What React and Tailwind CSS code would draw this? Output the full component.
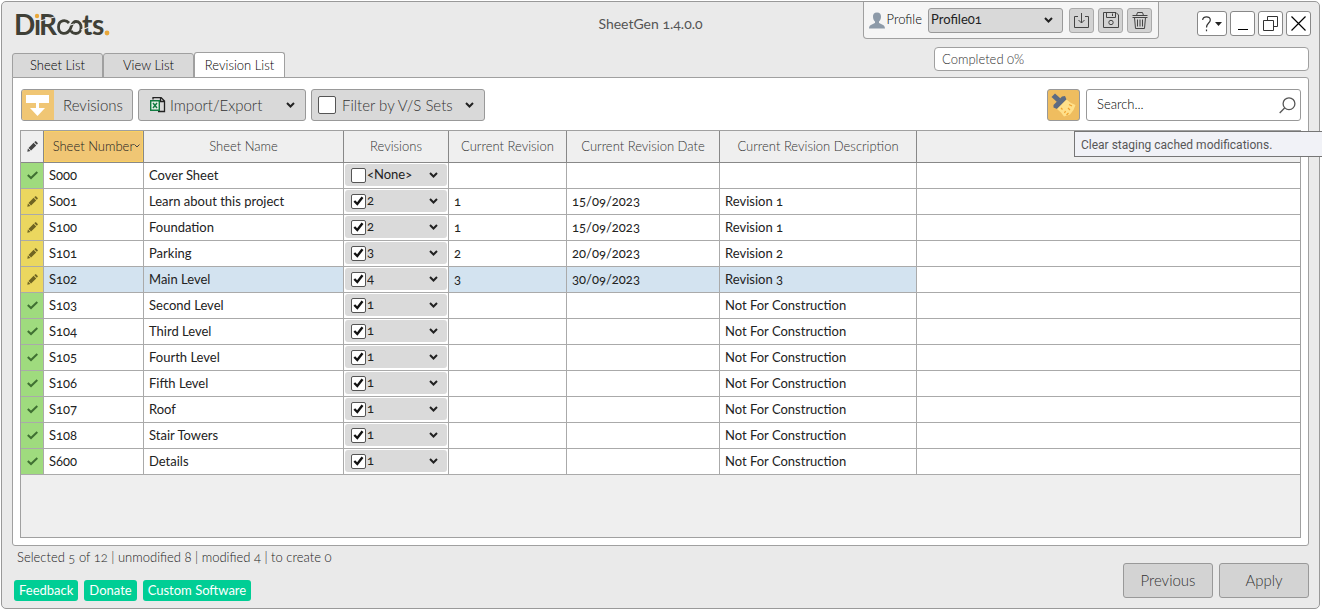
import React, { useState } from 'react';

const columns = [
  { label: 'Sheet Name', width: 'w-[200px]' },
  { label: 'Revisions', width: 'w-[105px]' },
  { label: 'Current Revision', width: 'w-[118px]' },
  { label: 'Current Revision Date', width: 'w-[153px]' },
  { label: 'Current Revision Description', width: 'w-[197px]' },
];

const initialSheets = [
  { number: 'S000', name: 'Cover Sheet', revisions: '<None>', checked: false, modified: false, current: '', date: '', description: '' },
  { number: 'S001', name: 'Learn about this project', revisions: '2', checked: true, modified: true, current: '1', date: '15/09/2023', description: 'Revision 1' },
  { number: 'S100', name: 'Foundation', revisions: '2', checked: true, modified: true, current: '1', date: '15/09/2023', description: 'Revision 1' },
  { number: 'S101', name: 'Parking', revisions: '3', checked: true, modified: true, current: '2', date: '20/09/2023', description: 'Revision 2' },
  { number: 'S102', name: 'Main Level', revisions: '4', checked: true, modified: true, current: '3', date: '30/09/2023', description: 'Revision 3' },
  { number: 'S103', name: 'Second Level', revisions: '1', checked: true, modified: false, current: '', date: '', description: 'Not For Construction' },
  { number: 'S104', name: 'Third Level', revisions: '1', checked: true, modified: false, current: '', date: '', description: 'Not For Construction' },
  { number: 'S105', name: 'Fourth Level', revisions: '1', checked: true, modified: false, current: '', date: '', description: 'Not For Construction' },
  { number: 'S106', name: 'Fifth Level', revisions: '1', checked: true, modified: false, current: '', date: '', description: 'Not For Construction' },
  { number: 'S107', name: 'Roof', revisions: '1', checked: true, modified: false, current: '', date: '', description: 'Not For Construction' },
  { number: 'S108', name: 'Stair Towers', revisions: '1', checked: true, modified: false, current: '', date: '', description: 'Not For Construction' },
  { number: 'S600', name: 'Details', revisions: '1', checked: true, modified: false, current: '', date: '', description: 'Not For Construction' },
];

const tabs = ['Sheet List', 'View List', 'Revision List'];

const Logo = () => (
  <svg width="110" height="42" viewBox="0 0 110 42" role="img" aria-label="DiRoots">
    <g fontFamily="Lato, sans-serif" fontSize="28" fontWeight="700" fill="#3f4037">
      <text x="0" y="31">D</text>
      <text x="20" y="31">ı</text>
      <text x="25" y="31">R</text>
      <text x="68" y="31">t</text>
      <text x="78" y="31">s</text>
    </g>
    <path
      d="M55 19 C52 15.500 44.500 15.500 44.500 23 C44.500 31 53 31 56 25.500 C58 21.500 58 17.500 62 17.500 C69 17.500 68.500 29.500 62 29.500 C59.500 29.500 57.500 28.500 57 26.500"
      fill="none"
      stroke="#3f4037"
      strokeWidth="2.800"
    />
    <path d="M26 17 L44 12 M52 22 L60 20 M67 26 L78 22" stroke="#eaeaea" strokeWidth="1.200" />
    <circle cx="23" cy="12" r="2.200" fill="#e9a83b" />
    <circle cx="93" cy="29" r="2.400" fill="#e9a83b" />
  </svg>
);

const Chevron = ({ className }) => (
  <svg className={className} width="9" height="6" viewBox="0 0 9 6" fill="none" aria-hidden="true">
    <path d="M1 1 L4.500 4.500 L8 1" stroke="#222" strokeWidth="2" />
  </svg>
);

const PencilIcon = ({ color }) => (
  <svg className="mx-auto" width="11" height="11" viewBox="0 0 11 11" fill={color} aria-hidden="true">
    <path d="M0.300 10.700 L0.900 7.500 L3.500 10.100 Z M1.500 6.900 L6.600 1.800 L9.200 4.400 L4.100 9.500 Z M7.300 1.200 L8.200 0.300 Q8.600 0 9 0.300 L10.700 2 Q11 2.400 10.700 2.800 L9.800 3.700 Z" />
  </svg>
);

const CheckIcon = () => (
  <svg className="mx-auto" width="11" height="9" viewBox="0 0 11 9" fill="none" aria-hidden="true">
    <path d="M0.800 4 L4 7 L10.300 1" stroke="#3f7032" strokeWidth="2" />
  </svg>
);

const CheckBox = ({ size, ...props }) => (
  <span className="relative inline-flex shrink-0">
    <input
      type="checkbox"
      className={`peer appearance-none rounded-[2px] border border-[#555] bg-white ${size === 'lg' ? 'size-[18px]' : 'size-[15px]'}`}
      {...props}
    />
    <svg className="pointer-events-none absolute inset-0 m-auto hidden peer-checked:block" width="11" height="10" viewBox="0 0 11 10" fill="none" aria-hidden="true">
      <path d="M1.300 5 L4.300 8 L9.500 1.200" stroke="#111" strokeWidth="2.400" />
    </svg>
  </span>
);

const RevisionPicker = ({ sheet, onToggle }) => (
  <div className="mx-px flex h-[22px] items-center rounded-[3px] bg-[#dadada] pl-1.5">
    <CheckBox
      checked={sheet.checked}
      onChange={onToggle}
      aria-label={`Apply revisions to ${sheet.number}`}
    />
    <div className="relative ml-px flex-1">
      <select className="block w-full appearance-none bg-transparent pb-0.5" defaultValue={sheet.revisions} aria-label={`Revisions of ${sheet.number}`}>
        <option>{sheet.revisions}</option>
      </select>
      <Chevron className="pointer-events-none absolute top-0 right-[9px] bottom-0 my-auto" />
    </div>
  </div>
);

const Header = () => (
  <header className="grid h-[45px] grid-cols-[1fr_auto_1fr] pr-2">
    <div className="pt-0.5 pl-3">
      <Logo />
    </div>
    <h1 className="mr-3 pt-3 text-[14px] leading-5 font-normal text-[#555]">SheetGen 1.4.0.0</h1>
    <div className="flex items-start justify-end">
      <div className="flex h-[37px] items-center rounded-b-[4px] border border-t-0 border-[#a0a0a0] bg-[#f5f5f5] pr-1.5 pl-1">
        <svg width="18" height="17" viewBox="0 0 18 17" fill="#8d9aa8" aria-hidden="true">
          <path d="M9 0.500 C12 0.500 13.200 2.600 13 5 C12.900 7 12 8.500 11 9.500 V11 C12.500 12 17 12.500 17 16.500 H1 C1 12.500 5.500 12 7 11 V9.500 C6 8.500 5.100 7 5 5 C4.800 2.600 6 0.500 9 0.500 Z" />
        </svg>
        <label htmlFor="profile" className="ml-px text-[13px] text-black">Profile</label>
        <div className="relative ml-1.5">
          <select id="profile" className="block h-[25px] w-[135px] appearance-none rounded-[3px] border border-[#999] bg-[#d9d9d9] pl-0.5 text-[13px] font-normal text-[#222]">
            <option>Profile01</option>
          </select>
          <Chevron className="pointer-events-none absolute top-0 right-2.5 bottom-0 my-auto" />
        </div>
        <div className="ml-1.5 flex gap-1">
          <button type="button" aria-label="Import profile" className="flex size-[25px] items-center justify-center rounded-[3px] border border-[#aaa] bg-[#d3d3d3]">
            <svg width="15" height="15" viewBox="0 0 15 15" fill="none" stroke="#444">
              <path d="M4 3.500 H0.500 V14.500 H14.500 V3.500 H11 M7.500 0 V10 M4.500 7 L7.500 10 L10.500 7" />
            </svg>
          </button>
          <button type="button" aria-label="Save profile" className="flex size-[25px] items-center justify-center rounded-[3px] border border-[#aaa] bg-[#d3d3d3]">
            <svg width="16" height="16" viewBox="0 0 16 16" fill="none" stroke="#444">
              <path d="M0.500 0.500 H13 L15.500 3 V15.500 H0.500 Z M3.500 0.500 V5.500 H12.500 V0.500 M9.500 1.500 V4" />
              <circle cx="8" cy="10.500" r="2.200" />
            </svg>
          </button>
          <button type="button" aria-label="Delete profile" className="flex size-[25px] items-center justify-center rounded-[3px] border border-[#aaa] bg-[#d3d3d3]">
            <svg width="16" height="17" viewBox="0 0 16 17" fill="none" stroke="#444">
              <path d="M0.500 3.500 H15.500 M0.500 5.500 H15.500 M4.500 3.500 L5.500 0.500 H10.500 L11.500 3.500 M2.500 5.500 L3.500 16.500 H12.500 L13.500 5.500 M5.500 7.500 V14.500 M8 7.500 V14.500 M10.500 7.500 V14.500" />
            </svg>
          </button>
        </div>
      </div>
      <div className="ml-[38px] flex gap-[3px] pt-[9px]">
        <button type="button" aria-label="Help" className="flex h-[25px] w-[30px] items-center justify-center gap-1 rounded-[3px] border border-[#888] bg-white">
          <svg width="9" height="16" viewBox="0 0 9 16" fill="none" stroke="#333" strokeWidth="1.200">
            <path d="M0.700 4 C0.700 -0.300 8.300 -0.300 8.300 4 C8.300 7.200 4.500 7 4.500 11.500 M4.500 13.500 V15.300" />
          </svg>
          <svg width="7" height="4" viewBox="0 0 7 4" fill="#222">
            <path d="M0 0 H7 L3.500 4 Z" />
          </svg>
        </button>
        <button type="button" aria-label="Minimize" className="flex size-[25px] items-end justify-center rounded-[3px] border border-[#888] bg-white pb-[5px]">
          <svg width="10" height="1" viewBox="0 0 10 1" fill="#000">
            <path d="M0 0 H10 V1 H0 Z" />
          </svg>
        </button>
        <button type="button" aria-label="Restore" className="flex size-[25px] items-center justify-center rounded-[3px] border border-[#888] bg-white">
          <svg width="15" height="15" viewBox="0 0 15 15" fill="none" stroke="#333">
            <path d="M0.500 4.500 H10.500 V14.500 H0.500 Z M4.500 4.500 V0.500 H14.500 V10.500 H10.500" />
          </svg>
        </button>
        <button type="button" aria-label="Close" className="flex size-[25px] items-center justify-center rounded-[3px] border border-[#888] bg-white">
          <svg width="15" height="15" viewBox="0 0 15 15" fill="none" stroke="#000" strokeWidth="1.200">
            <path d="M0.500 0.500 L14.500 14.500 M14.500 0.500 L0.500 14.500" />
          </svg>
        </button>
      </div>
    </div>
  </header>
);

const Toolbar = () => (
  <div className="flex h-8 items-stretch gap-[5px] pl-px">
    <button type="button" className="flex w-28 items-stretch overflow-hidden rounded-[3px] border border-[#999] bg-[#d9d9d9] text-[15px] text-[#333]">
      <span className="flex w-8 items-center justify-center bg-[#f0c674]">
        <svg width="24" height="21" viewBox="0 0 24 21" fill="#fff" aria-hidden="true">
          <path d="M0 0 H23 V8 H13 V13 H19 L11.500 21 L4 13 H10 V8 H0 Z" />
        </svg>
      </span>
      <span className="flex-1 self-center">Revisions</span>
    </button>
    <button type="button" className="flex w-42 items-center rounded-[3px] border border-[#999] bg-[#d9d9d9] pr-2.5 pl-[11px] text-[15px] text-[#333]">
      <svg width="16" height="16" viewBox="0 0 16 16" fill="none" aria-hidden="true">
        <path d="M3 2.500 V0.500 H11 L14.500 4 V14.500 H8 M10.500 0.500 V4.500 H14.500" stroke="#222" strokeWidth="1.300" />
        <path d="M0.700 3.700 H9.300 V13.300 H0.700 Z" fill="#e6f0e8" stroke="#107c41" strokeWidth="1.400" />
        <path d="M3 6 L7 11 M7 6 L3 11" stroke="#107c41" strokeWidth="1.500" />
      </svg>
      <span className="ml-1">Import/Export</span>
      <Chevron className="ml-auto" />
    </button>
    <div className="flex w-[174px] items-center rounded-[3px] border border-[#999] bg-[#d9d9d9] pr-2.5 pl-1.5 text-[15px] text-[#333]">
      <CheckBox id="filter-sets" size="lg" />
      <label htmlFor="filter-sets" className="ml-1.5">Filter by V/S Sets</label>
      <button type="button" aria-label="Choose sets" className="ml-auto">
        <Chevron />
      </button>
    </div>
    <div className="relative mr-px ml-auto flex">
      <button type="button" aria-label="Clear staging" aria-describedby="clear-tip" className="flex w-[33px] items-center justify-center rounded-[3px] border border-[#999] bg-[#efbd5f]">
        <svg width="25" height="24" viewBox="0 0 25 24" aria-hidden="true">
          <path d="M0.500 4 L4 0.500 L9.500 5.500 L6 9 Z" fill="#5d6b82" />
          <path d="M2.500 14.500 V12 L11 3.500 L14 3 L15.500 6.500 L6 16 Z" fill="#5d6b82" />
          <path d="M6 16 L15.500 6.500 L20 10 L24.500 12 L22.500 17 L19 21.500 L13 23.500 L10 19.500 Z" fill="#ffe08a" />
          <path d="M10 15 L11.500 16.500 M14.500 18 L13.500 20 M17 15 L19 17 M18 11.500 L21 13 M15.500 22 L17.500 20" stroke="#f0a22e" strokeWidth="1.200" />
        </svg>
      </button>
      <div id="clear-tip" role="tooltip" className="absolute top-[42px] left-[27px] z-10 h-[26px] w-[250px] border border-[#767676] bg-[#f1f2f7] pl-1.5 font-[Roboto,sans-serif] text-[12px] leading-[26px] font-normal whitespace-nowrap text-[#575757]">
        Clear staging cached modifications.
      </div>
    </div>
    <div className="flex w-[215px] items-center rounded-[3px] border border-[#999] bg-white pr-1">
      <input type="search" placeholder="Search..." aria-label="Search" className="min-w-0 flex-1 bg-transparent pl-2.5 text-[13px] outline-none placeholder:text-black" />
      <svg width="17" height="17" viewBox="0 0 17 17" fill="none" stroke="#555" strokeWidth="1.300" aria-hidden="true">
        <circle cx="10" cy="6.700" r="5.900" />
        <path d="M5.600 11 L0.700 16" />
      </svg>
    </div>
  </div>
);

const SheetTable = ({ sheets, onToggle }) => (
  <div className="flex-1 border border-[#a0a0a0] bg-[#efefef]">
    <table className="w-full table-fixed border-separate border-spacing-0 text-[13px] leading-5 text-[#222]">
      <thead>
        <tr className="h-8 text-[#333]">
          <th className="w-[23px] border-r border-b border-[#888] p-0" aria-label="Status">
            <PencilIcon color="#444" />
          </th>
          <th className="w-[100px] border-r border-b border-[#888] bg-[#f0c674] p-0 font-light text-[#222]">
            <button type="button" className="flex h-[31px] w-full items-center justify-end border border-[#fbd160] pr-0.5 pb-0.5 whitespace-nowrap">
              Sheet Number
              <svg width="6" height="4" viewBox="0 0 6 4" fill="none" stroke="#444" aria-hidden="true">
                <path d="M0.500 0.500 L3 3 L5.500 0.500" />
              </svg>
            </button>
          </th>
          {columns.map((column) => (
            <th key={column.label} className={`border-r border-b border-[#888] p-0 pb-0.5 font-light whitespace-nowrap ${column.width}`}>
              {column.label}
            </th>
          ))}
          <td className="border-b border-[#888]"></td>
        </tr>
      </thead>
      <tbody className="font-normal">
        {sheets.map((sheet) => {
          const cell = `border-r border-b border-[#aaa] pt-0 pr-0 pb-0.5 pl-[5px] ${sheet.number === 'S102' ? 'bg-[#d3e3f0]' : 'bg-white'}`;
          return (
            <tr key={sheet.number} className="h-[26px]">
              <td className={`border-r border-b border-[#aaa] p-0 ${sheet.modified ? 'bg-[#ebd75f]' : 'bg-[#9fdb7e]'}`}>
                {sheet.modified ? <PencilIcon color="#6f6422" /> : <CheckIcon />}
              </td>
              <td className={cell}>{sheet.number}</td>
              <td className={cell}>{sheet.name}</td>
              <td className="border-r border-b border-[#aaa] bg-white p-0 pt-px align-top">
                <RevisionPicker sheet={sheet} onToggle={() => onToggle(sheet.number)} />
              </td>
              <td className={cell}>{sheet.current}</td>
              <td className={cell}>{sheet.date}</td>
              <td className={cell}>{sheet.description}</td>
              <td className="border-b border-[#aaa] bg-white"></td>
            </tr>
          );
        })}
      </tbody>
    </table>
  </div>
);

const App = () => {
  const [activeTab, setActiveTab] = useState('Revision List');
  const [sheets, setSheets] = useState(initialSheets);

  const toggleSheet = (number) => {
    setSheets(sheets.map((s) => (s.number === number ? { ...s, checked: !s.checked } : s)));
  };

  return (
    <div className="flex min-h-screen flex-col overflow-hidden bg-white p-px pr-0.5 font-[Lato,sans-serif] font-light oldstyle-nums">
      <div className="flex flex-1 flex-col rounded-[5px] border border-[#999] bg-[#eaeaea]">
        <Header />

        {/* Tabs and progress */}
        <div className="flex h-[30px] items-end justify-between px-2.5">
          <div role="tablist" className="-mb-px flex items-end text-[13px] text-black">
            {tabs.map((tab) => (
              <button
                key={tab}
                type="button"
                role="tab"
                aria-selected={tab === activeTab}
                onClick={() => setActiveTab(tab)}
                className={`w-[91px] rounded-t-[3px] border border-[#a0a0a0] ${
                  tab === activeTab ? 'h-[26px] border-b-white bg-white pt-0.5' : 'h-[25px] bg-[#d9d9d9]'
                }`}
              >
                {tab}
              </button>
            ))}
          </div>
          <div role="status" className="h-6 w-[375px] self-start rounded-[4px] border border-[#a0a0a0] bg-white pl-[7px] text-[13px] leading-[22px] text-[#333]">
            Completed 0%
          </div>
        </div>

        <main className="mx-2.5 flex flex-1 flex-col gap-[9px] rounded-[3px] rounded-tl-none border border-[#a0a0a0] bg-white p-[7px] pt-[11px]">
          <Toolbar />
          <SheetTable sheets={sheets} onToggle={toggleSheet} />
        </main>

        <footer className="flex h-[62px] justify-between pr-2.5 pl-3 text-[13px]">
          <div>
            <p className="pt-px pl-[3px] leading-5 text-[#222]">Selected 5 of 12 | unmodified 8 | modified 4 | to create 0</p>
            <div className="mt-[13px] flex gap-1.5 leading-[21px] font-normal text-white">
              <a href="#feedback" className="rounded-[3px] bg-[#00ce95] px-[5px]">Feedback</a>
              <a href="#donate" className="rounded-[3px] bg-[#00ce95] px-[5px]">Donate</a>
              <a href="#custom-software" className="rounded-[3px] bg-[#00ce95] px-[5px]">Custom Software</a>
            </div>
          </div>
          <div className="flex gap-1.5 pt-[17px] text-[15px] text-[#333]">
            <button type="button" className="h-[35px] w-[90px] rounded-[3px] border border-[#999] bg-[#d3d3d3]">Previous</button>
            <button type="button" className="h-[35px] w-[90px] rounded-[3px] border border-[#999] bg-[#d3d3d3]">Apply</button>
          </div>
        </footer>
      </div>
    </div>
  );
};

export default App;
